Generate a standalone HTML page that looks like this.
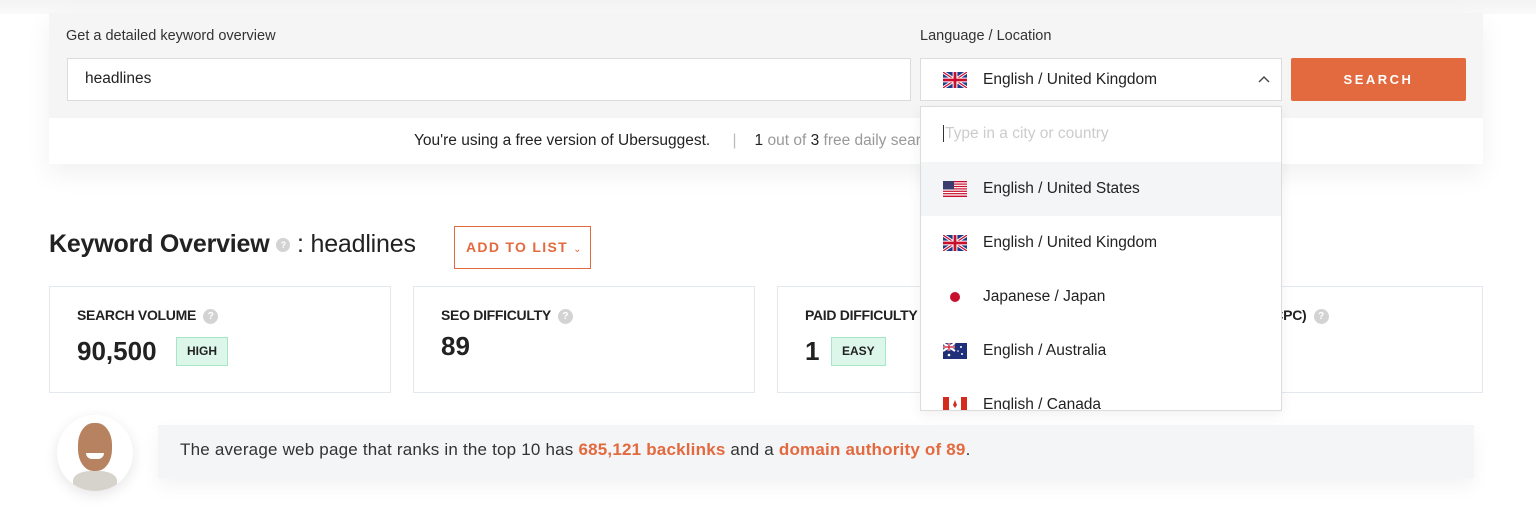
<!DOCTYPE html>
<html><head><style>
*{box-sizing:border-box;margin:0;padding:0}
body{width:1536px;height:509px;overflow:hidden;background:#fff;font-family:"Liberation Sans",sans-serif;color:#222;position:relative}
.abs{position:absolute}
.q{display:inline-block;width:15px;height:15px;border-radius:50%;background:#d3d3d3;color:#fff;font-size:10px;text-align:center;line-height:15px;vertical-align:middle}
.card{position:absolute;top:286px;width:342px;height:107px;border:1px solid #e3e8ee;background:#fff}
.card .t{position:absolute;left:27px;top:20px;font-size:14px;font-weight:bold;letter-spacing:-0.3px}
.card .v{position:absolute;left:27px;top:49px;font-size:26px;font-weight:bold}
.tag{position:absolute;top:50px;height:29px;padding:0 10px;background:#dcf7e9;border:1px solid #a6e6c6;font-size:12px;font-weight:bold;line-height:27px}
.row{position:absolute;left:0;width:360px;height:54px;font-size:15.5px;line-height:54px;padding-left:62px}
.flag{position:absolute;left:22px;top:19px;width:24px;height:16px}
</style></head><body>
<div class="abs" style="left:0;top:0;width:1536px;height:14px;background:linear-gradient(#f3f3f3,#fafafa)"></div>
<div class="abs" style="left:49px;top:13px;width:1434px;height:151px;box-shadow:0 10px 25px rgba(0,0,0,0.06)"></div>
<div class="abs" style="left:49px;top:13px;width:1434px;height:105px;background:#f4f5f4"></div>
<div class="abs" style="left:49px;top:118px;width:1434px;height:46px;background:#fff"></div>
<div class="abs" style="left:66px;top:28px;font-size:14.5px;color:#333">Get a detailed keyword overview</div>
<div class="abs" style="left:67px;top:58px;width:844px;height:43px;background:#fff;border:1px solid #dcdcdc;font-size:15.5px;padding:11px 0 0 17px">headlines</div>
<div class="abs" style="left:920px;top:28px;font-size:14.5px;color:#333">Language / Location</div>
<div class="abs" style="left:920px;top:58px;width:362px;height:43px;background:#fff;border:1px solid #dcdcdc;font-size:15.5px;padding:12px 0 0 62px">English / United Kingdom
<svg class="abs" style="left:22px;top:13px" width="24" height="16" viewBox="0 0 60 40"><rect width="60" height="40" fill="#1f3b8a"/><path d="M0 0L60 40M60 0L0 40" stroke="#fff" stroke-width="8"/><path d="M0 0L60 40M60 0L0 40" stroke="#c8102e" stroke-width="3"/><path d="M30 0V40M0 20H60" stroke="#fff" stroke-width="12"/><path d="M30 0V40M0 20H60" stroke="#c8102e" stroke-width="7"/></svg>
<svg class="abs" style="left:337px;top:16px" width="12" height="8"><path d="M1 7L6 2L11 7" stroke="#444" stroke-width="1.4" fill="none"/></svg></div>
<div class="abs" style="left:1291px;top:58px;width:175px;height:43px;background:#e3693f;color:#fff;font-size:13px;font-weight:bold;letter-spacing:2.5px;text-align:center;line-height:43px;border-radius:2px">SEARCH</div>
<div class="abs" style="left:414px;top:132px;font-size:15.5px;color:#222">You're using a free version of Ubersuggest. <span style="color:#bbb;margin:0 18px">|</span><span style="color:#999"><span style="color:#222">1</span> out of <span style="color:#222">3</span> free daily searches</span></div>

<div class="abs" style="left:49px;top:230px;font-size:25px;font-weight:bold;letter-spacing:-0.2px">Keyword Overview <span class="q" style="width:14px;height:14px;line-height:14px;font-size:9px">?</span> <span style="font-weight:normal">: headlines</span></div>
<div class="abs" style="left:454px;top:226px;width:137px;height:43px;border:1px solid #e3693f;color:#e3693f;font-size:14px;font-weight:bold;letter-spacing:1.3px;line-height:41px;padding-left:11px">ADD TO LIST <span style="font-weight:normal;font-size:10px">&#8964;</span></div>

<div class="card" style="left:49px"><div class="t">SEARCH VOLUME &nbsp;<span class="q">?</span></div><div class="v">90,500</div><div class="tag" style="left:126px">HIGH</div></div>
<div class="card" style="left:413px"><div class="t">SEO DIFFICULTY &nbsp;<span class="q">?</span></div><div class="v" style="top:44px">89</div></div>
<div class="card" style="left:777px"><div class="t">PAID DIFFICULTY</div><div class="v">1</div><div class="tag" style="left:53px">EASY</div></div>
<div class="card" style="left:1141px;width:342px"><div class="t" style="left:127px">(CPC) &nbsp;<span class="q">?</span></div></div>

<div class="abs" style="left:158px;top:425px;width:1316px;height:53px;background:#f4f5f7;box-shadow:0 8px 18px rgba(0,0,0,0.05)"></div>
<div class="abs" style="left:180px;top:440px;font-size:17px;color:#333;letter-spacing:0.2px">The average web page that ranks in the top 10 has <b style="color:#e3693f">685,121 backlinks</b> and a <b style="color:#e3693f">domain authority of 89</b>.</div>
<div class="abs" style="left:57px;top:415px;width:76px;height:76px;border-radius:50%;background:#fff;box-shadow:0 4px 14px rgba(0,0,0,0.1);overflow:hidden">
<div class="abs" style="left:21px;top:8px;width:34px;height:48px;border-radius:45%;background:#b7825f"></div>
<div class="abs" style="left:29px;top:38px;width:18px;height:6px;border-radius:0 0 8px 8px;background:#fff"></div>
<div class="abs" style="left:16px;top:56px;width:44px;height:24px;background:#d6d2cc;border-radius:40% 40% 0 0"></div></div>

<div class="abs" style="left:920px;top:106px;width:362px;height:305px;background:#fff;border:1px solid #dcdcdc;overflow:hidden;box-shadow:0 4px 12px rgba(0,0,0,0.06)">
<div class="row" style="top:0;height:55px;color:#ccc;padding-left:22px"><span style="border-left:1px solid #333;padding-left:1px">Type in a city or country</span></div>
<div class="row" style="top:55px;background:#f4f5f7"><svg class="flag" viewBox="0 0 24 16"><rect width="24" height="16" fill="#fff"/><g fill="#c8102e"><rect y="0" width="24" height="1.3"/><rect y="2.5" width="24" height="1.2"/><rect y="4.9" width="24" height="1.2"/><rect y="7.3" width="24" height="1.2"/><rect y="9.7" width="24" height="1.2"/><rect y="12.1" width="24" height="1.2"/><rect y="14.6" width="24" height="1.4"/></g><rect width="11" height="8.5" fill="#3c3b6e"/></svg>English / United States</div>
<div class="row" style="top:109px"><svg class="flag" viewBox="0 0 60 40"><rect width="60" height="40" fill="#1f3b8a"/><path d="M0 0L60 40M60 0L0 40" stroke="#fff" stroke-width="8"/><path d="M0 0L60 40M60 0L0 40" stroke="#c8102e" stroke-width="3"/><path d="M30 0V40M0 20H60" stroke="#fff" stroke-width="12"/><path d="M30 0V40M0 20H60" stroke="#c8102e" stroke-width="7"/></svg>English / United Kingdom</div>
<div class="row" style="top:163px"><svg class="flag" viewBox="0 0 24 16"><circle cx="12" cy="8" r="5" fill="#c8102e"/></svg>Japanese / Japan</div>
<div class="row" style="top:217px"><svg class="flag" viewBox="0 0 24 16"><rect width="24" height="16" fill="#1f2f7a"/><path d="M0 0L12 8M12 0L0 8" stroke="#fff" stroke-width="2"/><path d="M6 0V8M0 4H12" stroke="#fff" stroke-width="2.5"/><path d="M6 0V8M0 4H12" stroke="#c8102e" stroke-width="1.2"/><circle cx="6" cy="12" r="1.3" fill="#fff"/><circle cx="18" cy="4" r="1" fill="#fff"/><circle cx="19" cy="11" r="1" fill="#fff"/><circle cx="15" cy="8" r="0.8" fill="#fff"/></svg>English / Australia</div>
<div class="row" style="top:271px"><svg class="flag" viewBox="0 0 24 16"><rect width="24" height="16" fill="#fff"/><rect width="6" height="16" fill="#d52b1e"/><rect x="18" width="6" height="16" fill="#d52b1e"/><path d="M12 3L14 8L12 11L10 8Z" fill="#d52b1e"/></svg>English / Canada</div>
</div>
</body></html>
